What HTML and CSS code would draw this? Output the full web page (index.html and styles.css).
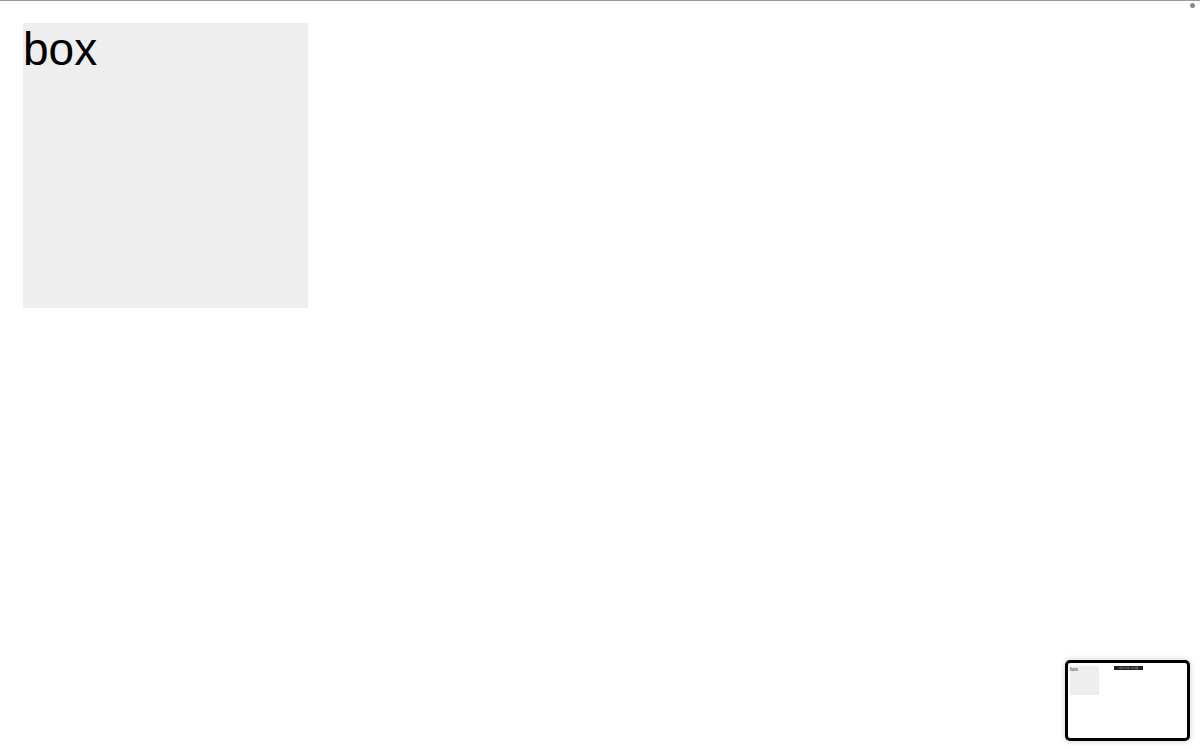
FILE: index.html
```html
<!DOCTYPE html>
<html lang="en">
<head>
    <meta charset="UTF-8">
    <title>box</title>
    <link rel="stylesheet" href="styles.css">
</head>
<body>
    <div class="status-dot"></div>

    <div class="box">box</div>

    <!-- minimapa -->
    <div class="minimap">
        <div class="minimap-view">
            <div class="mini-box">box</div>
            <div class="mini-label">selection ready</div>
        </div>
    </div>
</body>
</html>
```

FILE: styles.css
```css
html, body {
    margin: 0;
    padding: 0;
    background: #fff;
}

body {
    font-family: "Liberation Sans", Arial, sans-serif;
    border-top: 1px solid #9a9a9a;
    padding: 22px 23px;
    height: 750px;
    box-sizing: border-box;
}

.status-dot {
    position: absolute;
    top: 3px;
    right: 5px;
    width: 5px;
    height: 5px;
    border-radius: 50%;
    background-color: #8a8a8a;
}

.box {
    width: 285px;
    height: 285px;
    background-color: #eee;
    color: #000;
    font-size: 46px;
    line-height: 1.15;
}

.minimap {
    position: fixed;
    left: 1065px;
    top: 660px;
    width: 119px;
    height: 75px;
    border: 3px solid #000;
    border-radius: 5px;
    background: #fff;
    box-shadow: 0 0 6px rgba(0, 0, 0, 0.18);
}

.minimap-view {
    position: relative;
    width: 119px;
    height: 75px;
    overflow: hidden;
}

.mini-box {
    position: absolute;
    left: 2px;
    top: 3px;
    width: 29px;
    height: 29px;
    background-color: #eee;
    font-size: 5px;
    line-height: 6px;
    color: #333;
}

.mini-label {
    position: absolute;
    left: 46px;
    top: 3px;
    width: 29px;
    height: 4px;
    background-color: #222;
    color: #999;
    font-size: 3px;
    line-height: 4px;
    text-align: center;
    white-space: nowrap;
    overflow: hidden;
}
```
